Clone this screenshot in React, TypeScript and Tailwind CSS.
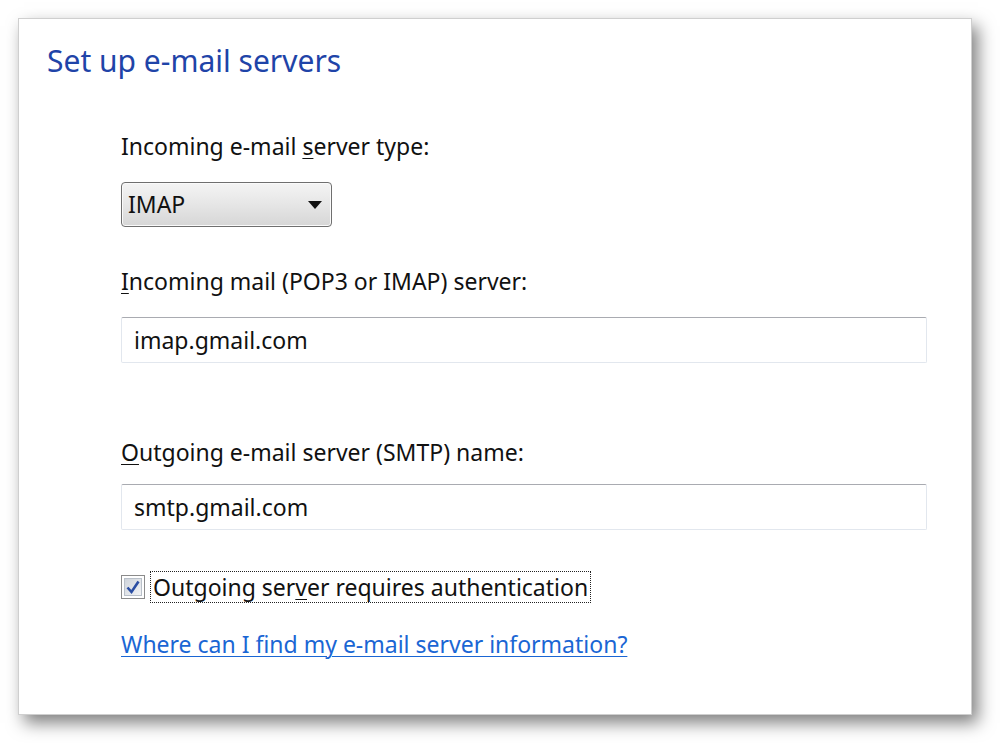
import { useState } from "react"

const font = { fontFamily: '"Noto Sans", "Open Sans", sans-serif' }

function Label({ pre, u, post }: { pre: string; u: string; post: string }) {
  return (
    <div className="text-[23px] leading-[28px] text-[#111]">
      {pre}
      <span className="underline underline-offset-[3px] decoration-1">{u}</span>
      {post}
    </div>
  )
}

function TextBox({ value }: { value: string }) {
  return (
    <div className="h-[46px] w-[806px] rounded-[2px] border border-[#e2e7ee] border-t-[#a9abb1] bg-white flex items-center pl-[12px] text-[23px] text-[#111]">
      {value}
    </div>
  )
}

export default function App() {
  const [checked, setChecked] = useState(true)

  return (
    <div className="h-[743px] w-[1000px] bg-white pt-[18px] pl-[18px]" style={font}>
      <div className="h-[697px] w-[954px] bg-white border border-[#cfcfcf] shadow-[6px_8px_16px_rgba(0,0,0,0.5)]">
        <div className="pl-[28px] pt-[22px] text-[30px] leading-[40px] text-[#1f44a8]">
          Set up e-mail servers
        </div>

        <div className="pl-[102px] pt-[51px] flex flex-col">
          <Label pre="Incoming e-mail " u="s" post="erver type:" />

          <div className="mt-[22px] h-[45px] w-[211px] rounded-[4px] border border-[#6f6f6f] bg-gradient-to-b from-[#f4f4f4] via-[#e6e6e6] to-[#d6d6d6] shadow-[inset_0_0_0_1px_#fafafa] flex items-center justify-between pl-[6px] pr-[9px]">
            <span className="text-[23px] text-[#111]">IMAP</span>
            <svg width="14" height="8" viewBox="0 0 14 8">
              <path d="M0 0 H14 L7 8 Z" fill="#111" />
            </svg>
          </div>

          <div className="mt-[40px]">
            <Label pre="" u="I" post="ncoming mail (POP3 or IMAP) server:" />
          </div>
          <div className="mt-[22px]">
            <TextBox value="imap.gmail.com" />
          </div>

          <div className="mt-[75px]">
            <Label pre="" u="O" post="utgoing e-mail server (SMTP) name:" />
          </div>
          <div className="mt-[18px]">
            <TextBox value="smtp.gmail.com" />
          </div>

          <label className="mt-[41px] flex items-center cursor-pointer select-none">
            <input
              type="checkbox"
              className="sr-only"
              checked={checked}
              onChange={(e) => setChecked(e.target.checked)}
            />
            <span className="h-[24px] w-[24px] border border-[#8b8b8b] bg-white p-[2px]">
              <span className="flex h-full w-full items-center justify-center border border-[#b9c0c9] bg-gradient-to-br from-[#cfd4db] to-[#f2f3f5]">
                {checked && (
                  <svg width="16" height="16" viewBox="0 0 16 16">
                    <path d="M2.5 8.5 L6.5 13 L13.5 2.5" fill="none" stroke="#2b4ea3" strokeWidth="2.6" />
                  </svg>
                )}
              </span>
            </span>
            <span className="ml-[5px] border border-dotted border-[#222] px-[2px] text-[23px] leading-[30px] text-[#111]">
              Outgoing ser<span className="underline underline-offset-[3px] decoration-1">v</span>er requires authentication
            </span>
          </label>

          <a href="#" className="mt-[27px] self-start text-[23px] leading-[28px] text-[#1a66d4] underline underline-offset-[3px] decoration-1">
            Where can I find my e-mail server information?
          </a>
        </div>
      </div>
    </div>
  )
}
